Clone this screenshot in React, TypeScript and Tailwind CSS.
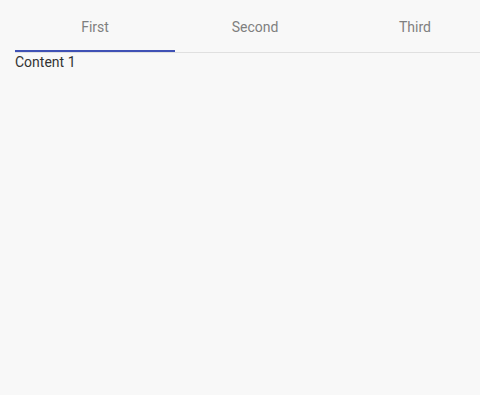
import React, { useState } from 'react';

const tabs = ['First', 'Second', 'Third'];

export default function App() {
  const [active, setActive] = useState(0);
  return (
    <div className="w-[480px] h-[395px] bg-[#f8f8f8] overflow-hidden pl-[15px] pt-[4px] font-['Roboto',sans-serif]">
      <div className="flex border-b border-[#e0e0e0] overflow-hidden">
        {tabs.map((t, i) => (
          <button
            key={t}
            onClick={() => setActive(i)}
            className={`shrink-0 w-[160px] h-[48px] text-sm text-[#7f7f7f] flex items-center justify-center border-b-2 ${
              i === active ? 'border-[#3f51b5]' : 'border-transparent'
            }`}
          >
            {t}
          </button>
        ))}
      </div>
      <div className="text-sm text-[#333] leading-[18px]">Content {active + 1}</div>
    </div>
  );
}
